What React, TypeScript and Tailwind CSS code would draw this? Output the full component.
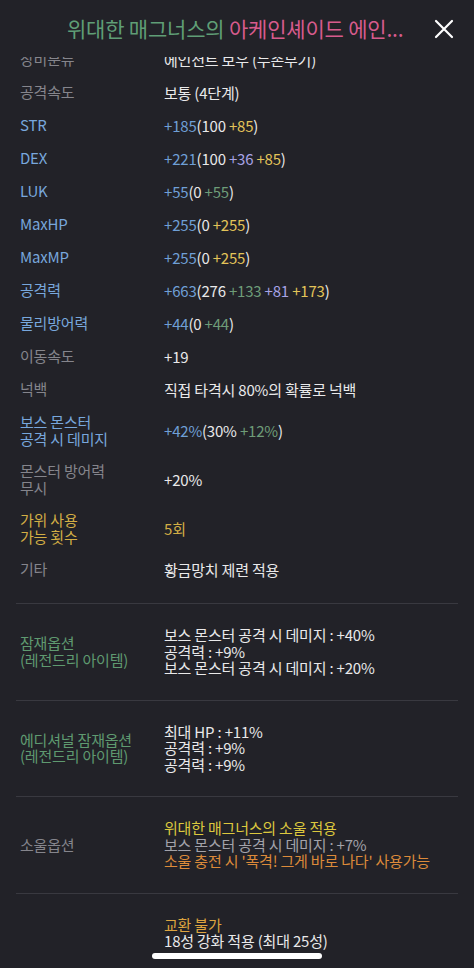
import React from 'react';

type Part = { t: string; c?: string };

interface StatRow {
  label: string[];
  labelColor: string;
  value: Part[];
}

const W = 'text-[#e9e9ea]';
const BLUE = 'text-[#6f9fd6]';
const YEL = 'text-[#e3c459]';
const PUR = 'text-[#a7a3e6]';
const GRN = 'text-[#6e9c78]';

const LABEL_GRAY = 'text-[#85858c]';
const LABEL_BLUE = 'text-[#78a7dc]';

const rows: StatRow[] = [
  { label: ['장비분류'], labelColor: LABEL_GRAY, value: [{ t: '에인션트 보우 (누손부기)' }] },
  { label: ['공격속도'], labelColor: LABEL_GRAY, value: [{ t: '보통 (4단계)' }] },
  { label: ['STR'], labelColor: LABEL_BLUE, value: [{ t: '+185', c: BLUE }, { t: '(100 ' }, { t: '+85', c: YEL }, { t: ')' }] },
  { label: ['DEX'], labelColor: LABEL_BLUE, value: [{ t: '+221', c: BLUE }, { t: '(100 ' }, { t: '+36 ', c: PUR }, { t: '+85', c: YEL }, { t: ')' }] },
  { label: ['LUK'], labelColor: LABEL_BLUE, value: [{ t: '+55', c: BLUE }, { t: '(0 ' }, { t: '+55', c: GRN }, { t: ')' }] },
  { label: ['MaxHP'], labelColor: LABEL_BLUE, value: [{ t: '+255', c: BLUE }, { t: '(0 ' }, { t: '+255', c: YEL }, { t: ')' }] },
  { label: ['MaxMP'], labelColor: LABEL_BLUE, value: [{ t: '+255', c: BLUE }, { t: '(0 ' }, { t: '+255', c: YEL }, { t: ')' }] },
  {
    label: ['공격력'],
    labelColor: LABEL_BLUE,
    value: [{ t: '+663', c: BLUE }, { t: '(276 ' }, { t: '+133 ', c: GRN }, { t: '+81 ', c: PUR }, { t: '+173', c: YEL }, { t: ')' }],
  },
  { label: ['물리방어력'], labelColor: LABEL_BLUE, value: [{ t: '+44', c: BLUE }, { t: '(0 ' }, { t: '+44', c: GRN }, { t: ')' }] },
  { label: ['이동속도'], labelColor: LABEL_GRAY, value: [{ t: '+19' }] },
  { label: ['넉백'], labelColor: LABEL_GRAY, value: [{ t: '직접 타격시 80%의 확률로 넉백' }] },
  { label: ['보스 몬스터', '공격 시 데미지'], labelColor: LABEL_BLUE, value: [{ t: '+42%', c: BLUE }, { t: '(30% ' }, { t: '+12%', c: GRN }, { t: ')' }] },
  { label: ['몬스터 방어력', '무시'], labelColor: LABEL_GRAY, value: [{ t: '+20%' }] },
  { label: ['가위 사용', '가능 횟수'], labelColor: 'text-[#d2ae45]', value: [{ t: '5회', c: 'text-[#d2ae45]' }] },
  { label: ['기타'], labelColor: LABEL_GRAY, value: [{ t: '황금망치 제련 적용' }] },
];

interface Section {
  label: string[];
  labelColor: string;
  lines: Part[];
}

const sections: Section[] = [
  {
    label: ['잠재옵션', '(레전드리 아이템)'],
    labelColor: 'text-[#5f9a70]',
    lines: [{ t: '보스 몬스터 공격 시 데미지 : +40%' }, { t: '공격력 : +9%' }, { t: '보스 몬스터 공격 시 데미지 : +20%' }],
  },
  {
    label: ['에디셔널 잠재옵션', '(레전드리 아이템)'],
    labelColor: 'text-[#5f9a70]',
    lines: [{ t: '최대 HP : +11%' }, { t: '공격력 : +9%' }, { t: '공격력 : +9%' }],
  },
  {
    label: ['소울옵션'],
    labelColor: LABEL_GRAY,
    lines: [
      { t: '위대한 매그너스의 소울 적용', c: 'text-[#dcc83e]' },
      { t: '보스 몬스터 공격 시 데미지 : +7%', c: 'text-[#a3a3aa]' },
      { t: "소울 충전 시 '폭격! 그게 바로 나다' 사용가능", c: 'text-[#dc8a3a]' },
    ],
  },
  {
    label: [],
    labelColor: LABEL_GRAY,
    lines: [{ t: '교환 불가', c: 'text-[#dda43f]' }, { t: '18성 강화 적용 (최대 25성)' }],
  },
];

function Row({ row }: { row: StatRow }) {
  const double = row.label.length > 1;
  return (
    <div className={`flex items-center ${double ? 'h-[49px]' : 'h-[33px]'}`}>
      <div className={`w-[144px] shrink-0 leading-[16.5px] ${row.labelColor}`}>
        {row.label.map((l) => (
          <div key={l}>{l}</div>
        ))}
      </div>
      <div className={`leading-[20px] ${W}`}>
        {row.value.map((p, i) => (
          <span key={i} className={p.c}>
            {p.t}
          </span>
        ))}
      </div>
    </div>
  );
}

function SectionBlock({ s }: { s: Section }) {
  return (
    <div className="mx-4 border-t border-[#393940] flex items-center py-[23px] pl-1">
      <div className={`w-[144px] shrink-0 leading-[16.5px] ${s.labelColor}`}>
        {s.label.map((l) => (
          <div key={l}>{l}</div>
        ))}
      </div>
      <div className="leading-[16.5px]">
        {s.lines.map((p, i) => (
          <div key={i} className={p.c ?? W}>
            {p.t}
          </div>
        ))}
      </div>
    </div>
  );
}

export default function App() {
  return (
    <div
      className="relative w-[474px] h-[968px] overflow-hidden bg-[#222228] text-[15px] tracking-[-0.2px]"
      style={{ fontFamily: '"Noto Sans CJK KR", "Noto Sans", sans-serif' }}
    >
      <div className="relative z-10 h-[57px] bg-[#222228] flex items-center">
        <div className="flex-1 pl-[67px] pr-2 text-[21px] whitespace-nowrap overflow-hidden">
          <span className="text-[#5f9e76]">위대한 매그너스의 </span>
          <span className="text-[#d75b8d]">아케인셰이드 에인...</span>
        </div>
        <button className="w-[60px] h-[57px] flex items-center justify-center text-white">
          <svg width="22" height="22" viewBox="0 0 22 22" fill="none" stroke="currentColor" strokeWidth="2.2" strokeLinecap="round">
            <path d="M3 3 L19 19 M19 3 L3 19" />
          </svg>
        </button>
      </div>
      <div className="-mt-[14px]">
        <div className="pl-5 pr-4">
          {rows.map((r) => (
            <Row key={r.label.join()} row={r} />
          ))}
        </div>
        <div className="h-[17px]" />
        {sections.map((s, i) => (
          <SectionBlock key={i} s={s} />
        ))}
      </div>
      <div className="absolute left-[152px] bottom-[9px] w-[170px] h-[6px] rounded-full bg-white" />
    </div>
  );
}
